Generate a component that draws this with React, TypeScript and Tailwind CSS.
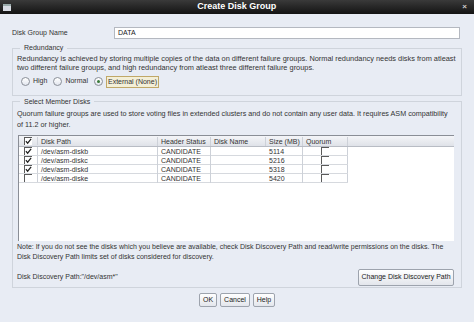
import type { ReactNode } from 'react'

type Disk = { path: string; status: string; name: string; size: string; selected: boolean }

const disks: Disk[] = [
  { path: '/dev/asm-diskb', status: 'CANDIDATE', name: '', size: '5114', selected: true },
  { path: '/dev/asm-diskc', status: 'CANDIDATE', name: '', size: '5216', selected: true },
  { path: '/dev/asm-diskd', status: 'CANDIDATE', name: '', size: '5318', selected: true },
  { path: '/dev/asm-diske', status: 'CANDIDATE', name: '', size: '5420', selected: false },
]

function Check({ checked }: { checked: boolean }) {
  return (
    <span className="flex h-[8px] w-[8px] items-center justify-center border-l border-t border-[#5a5a5a] bg-white">
      {checked ? (
        <svg viewBox="0 0 8 8" className="h-[7px] w-[7px]">
          <path d="M1 3.5 L3 6 L7 1" fill="none" stroke="#222" strokeWidth="1.4" />
        </svg>
      ) : null}
    </span>
  )
}

function Radio({ checked }: { checked?: boolean }) {
  return (
    <span className="flex h-[9px] w-[9px] items-center justify-center rounded-full border border-[#8a8f98] bg-gradient-to-b from-white to-[#e2e6ee]">
      {checked ? <span className="h-[3px] w-[3px] rounded-full bg-[#3a7a3a]" /> : null}
    </span>
  )
}

function Btn({ children, className = '' }: { children: ReactNode; className?: string }) {
  return (
    <button
      className={`flex items-center justify-center whitespace-nowrap rounded-[2px] border border-[#9da3ad] bg-gradient-to-b from-white to-[#e3e6ec] px-[3px] text-[7px] text-[#222] ${className}`}
    >
      {children}
    </button>
  )
}

function Group({ legend, children, className = '' }: { legend: string; children: ReactNode; className?: string }) {
  return (
    <fieldset className={`mx-[12px] border border-[#cfd4dc] px-[4px] ${className}`}>
      <legend className="ml-[3px] px-[4px] text-[7px] text-[#333]">{legend}</legend>
      {children}
    </fieldset>
  )
}

const cell = 'overflow-hidden whitespace-nowrap border-r border-[#cdd1d8] px-[3px] leading-[9px]'

export default function App() {
  return (
    <div className="flex h-[326px] w-[474px] flex-col overflow-hidden bg-white font-['Liberation_Sans',Arial,sans-serif] text-[#333]">
      <div className="flex h-[14px] items-center justify-between bg-gradient-to-b from-[#3a3a3a] to-[#141414] px-[3px]">
        <span className="h-[7px] w-[8px] border-t-2 border-[#9aa] bg-[#d8dce4]" />
        <span className="text-[9px] font-bold text-white">Create Disk Group</span>
        <span className="pr-[4px] text-[8px] font-bold text-[#ccc]">×</span>
      </div>

      <div className="flex h-[308px] flex-col bg-[#e8ecf4] text-[7px]">
        <div className="mt-[13px] flex items-center pl-[12px] pr-[14px]">
          <span className="w-[102px]">Disk Group Name</span>
          <div className="flex h-[12px] flex-1 items-center border border-[#b4b8c0] bg-white pl-[3px] text-[#222]">DATA</div>
        </div>

        <Group legend="Redundancy" className="mt-[4px] pb-[7px]">
          <p className="text-[7.4px] leading-[9px]">
            Redundancy is achieved by storing multiple copies of the data on different failure groups. Normal redundancy needs disks from atleast two different failure groups, and high redundancy from atleast three different failure groups.
          </p>
          <div className="mt-[4px] flex items-center gap-[3px] pl-[4px]">
            <Radio />
            <span className="mr-[3px]">High</span>
            <Radio />
            <span className="mr-[3px]">Normal</span>
            <Radio checked />
            <span className="border border-[#c0a868] bg-[#f3efd8] px-[1px] leading-[10px]">External (None)</span>
          </div>
        </Group>

        <Group legend="Select Member Disks" className="mt-[1px] pb-[1px]">
          <p className="mt-[1px] whitespace-nowrap text-[7.2px] leading-[11px]">
            Quorum failure groups are used to store voting files in extended clusters and do not contain any user data. It requires ASM compatibility
            <br />
            of 11.2 or higher.
          </p>
          <div className="mt-[5px] mr-[3px] ml-[1px] h-[106px] border-l border-t border-[#8a8e96] bg-white">
            <div className="flex h-[11px] items-center border-b border-[#b8bcc4] bg-gradient-to-b from-[#f4f5f8] to-[#dfe2e8]">
              <div className={`${cell} flex w-[19px] justify-center`}>
                <Check checked />
              </div>
              <div className={`${cell} w-[120px]`}>Disk Path</div>
              <div className={`${cell} w-[53px]`}>Header Status</div>
              <div className={`${cell} w-[55px]`}>Disk Name</div>
              <div className={`${cell} w-[37px]`}>Size (MB)</div>
              <div className={`${cell} w-[45px]`}>Quorum</div>
            </div>
            {disks.map((d) => (
              <div key={d.path} className="flex h-[9px] w-[329px] items-center border-b border-[#d6d9de]">
                <div className={`${cell} flex w-[19px] justify-center`}>
                  <Check checked={d.selected} />
                </div>
                <div className={`${cell} w-[120px]`}>{d.path}</div>
                <div className={`${cell} w-[53px]`}>{d.status}</div>
                <div className={`${cell} w-[55px]`}>{d.name}</div>
                <div className={`${cell} w-[37px]`}>{d.size}</div>
                <div className={`${cell} flex w-[45px] justify-center`}>
                  <Check checked={false} />
                </div>
              </div>
            ))}
          </div>
          <p className="mt-[1px] leading-[10px]">
            Note: If you do not see the disks which you believe are available, check Disk Discovery Path and read/write permissions on the disks. The Disk Discovery Path limits set of disks considered for discovery.
          </p>
          <div className="mt-[7px] flex items-center justify-between pr-[3px]">
            <span>Disk Discovery Path:"/dev/asm*"</span>
            <Btn className="h-[17px] w-[96px]">Change Disk Discovery Path</Btn>
          </div>
        </Group>

        <div className="mt-[5px] flex justify-center gap-[3px]">
          <Btn className="h-[14px] w-[18px]">OK</Btn>
          <Btn className="h-[14px] w-[30px]">Cancel</Btn>
          <Btn className="h-[14px] w-[22px]">Help</Btn>
        </div>
      </div>
    </div>
  )
}
